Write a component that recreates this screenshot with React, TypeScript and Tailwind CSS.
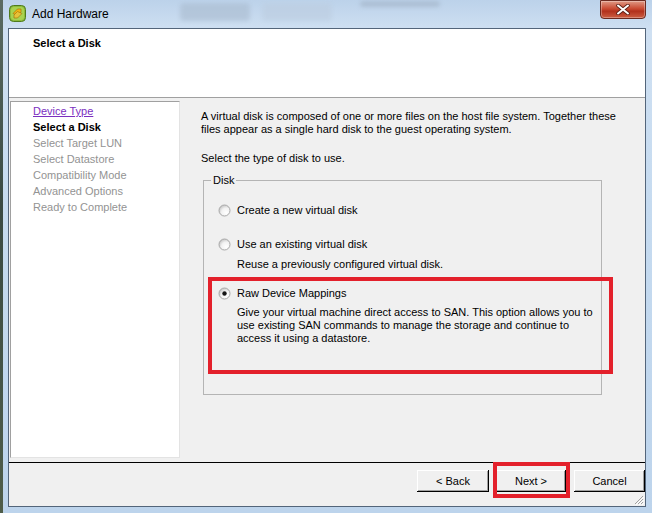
import { useState } from 'react'

const STEPS = [
  { label: 'Device Type', state: 'done' },
  { label: 'Select a Disk', state: 'current' },
  { label: 'Select Target LUN', state: 'todo' },
  { label: 'Select Datastore', state: 'todo' },
  { label: 'Compatibility Mode', state: 'todo' },
  { label: 'Advanced Options', state: 'todo' },
  { label: 'Ready to Complete', state: 'todo' },
]

function AppIcon() {
  return (
    <svg width="17" height="17" viewBox="0 0 17 17" className="shrink-0">
      <rect x="0.5" y="0.5" width="16" height="16" rx="4" fill="#8cbc3c" stroke="#4f7a1c" />
      <rect x="2" y="2" width="13" height="13" rx="3" fill="#a9d24f" />
      <path d="M4 8.5 L8.5 4 H12 V7 L8.5 10.5 Z" fill="#f4b414" stroke="#9a6a08" strokeWidth="0.6" />
      <path d="M13 8.5 L8.5 13 H5 V10 L8.5 6.5 Z" fill="#e6c23a" stroke="#9a6a08" strokeWidth="0.6" />
    </svg>
  )
}

function CloseButton() {
  return (
    <div className="flex h-[19px] w-[46px] items-center justify-center rounded-b-[4px] border border-[#6b2a20] bg-[linear-gradient(#e09a86,#c94a32_45%,#b2311c_60%,#cc5e42)] shadow-[inset_0_0_0_1px_rgba(255,255,255,0.3)]">
      <svg width="14" height="11" viewBox="0 0 14 11">
        <path d="M2 1.5 L12 9.5 M12 1.5 L2 9.5" stroke="#5a1f16" strokeWidth="3.6" strokeLinecap="round" />
        <path d="M2 1.5 L12 9.5 M12 1.5 L2 9.5" stroke="#ffffff" strokeWidth="2" strokeLinecap="round" />
      </svg>
    </div>
  )
}

function Radio({ checked = false }: { checked?: boolean }) {
  return (
    <svg width="13" height="13" viewBox="0 0 13 13" className="shrink-0">
      <defs>
        <radialGradient id={checked ? 'rg1' : 'rg0'} cx="0.65" cy="0.7" r="0.7">
          <stop offset="0" stopColor="#ffffff" />
          <stop offset="0.6" stopColor="#f2f2f2" />
          <stop offset="1" stopColor="#c8c8c8" />
        </radialGradient>
      </defs>
      <circle cx="6.5" cy="6.5" r="5.5" fill={`url(#${checked ? 'rg1' : 'rg0'})`} stroke="#a8a8a8" />
      {checked && <circle cx="6.5" cy="6.5" r="2.2" fill="#151515" />}
    </svg>
  )
}

function Btn({ label, w }: { label: string; w: string }) {
  return (
    <button
      className={`${w} h-[22px] bg-[#f0f0f0] text-[11px] text-black shadow-[inset_-1px_-1px_0_#000,inset_1px_1px_0_#fff,inset_-2px_-2px_0_#a0a0a0]`}
    >
      {label}
    </button>
  )
}

export default function App() {
  const [choice, setChoice] = useState('raw')

  return (
    <div className="relative h-[513px] w-[652px] overflow-hidden bg-[linear-gradient(180deg,#bcd2ea,#cfe0f2_6%,#c6dbf0_40%,#bdd4ec)] font-['Liberation_Sans',Arial,sans-serif] text-black">
      {/* blurred desktop behind the glass */}
      <div className="absolute left-0 top-0 h-full w-[3px] bg-[linear-gradient(#5b6b62,#3a4a44_40%,#4f5d4a)]" />
      <div className="absolute left-[180px] top-[3px] h-[18px] w-[70px] rounded bg-[#a9bbcf] opacity-60 blur-[2px]" />
      <div className="absolute left-[262px] top-[3px] h-[18px] w-[70px] rounded bg-[#bccde0] opacity-60 blur-[2px]" />
      <div className="absolute left-[360px] top-[1px] h-[6px] w-[80px] rounded bg-[#9aaabd] opacity-50 blur-[2px]" />

      {/* title bar */}
      <div className="flex h-[28px] items-start">
        <div className="flex items-center gap-[6px] pl-[9px] pt-[5px]">
          <AppIcon />
          <span className="text-[12px] leading-[16px]">Add Hardware</span>
        </div>
        <div className="ml-auto mr-[6px]">
          <CloseButton />
        </div>
      </div>

      {/* client area */}
      <div className="ml-[8px] mr-[6px] flex h-[479px] flex-col border border-[#53657a] bg-[#f0f0f0] text-[11px] leading-[13px]">
        <div className="h-[69px] shrink-0 border-b border-[#a0a0a0] bg-white pl-[24px] pt-[8px] font-bold">
          Select a Disk
        </div>

        <div className="flex min-h-0 flex-1">
          <div className="mb-[4px] ml-px mt-[3px] w-[170px] shrink-0 border border-b-[#e3e3e3] border-l-[#a0a0a0] border-r-[#e3e3e3] border-t-[#a0a0a0] bg-white pl-[22px] pt-px">
            {STEPS.map(s => (
              <div
                key={s.label}
                className={
                  s.state === 'done'
                    ? 'leading-[16px] text-[#7b2fbf] underline'
                    : s.state === 'current'
                      ? 'font-bold leading-[16px]'
                      : 'leading-[16px] text-[#939393]'
                }
              >
                {s.label}
              </div>
            ))}
          </div>

          <div className="ml-[21px] flex flex-1 flex-col pt-[12px]">
            <p>
              A virtual disk is composed of one or more files on the host file system. Together these
              <br />
              files appear as a single hard disk to the guest operating system.
            </p>
            <p className="mt-[16px]">Select the type of disk to use.</p>

            <fieldset className="ml-[2px] mt-[9px] h-[221px] w-[399px] border border-[#b4b4b4]">
              <legend className="ml-[7px] px-[2px]">Disk</legend>

              <div className="pl-[14px]">
                <label className="mt-[17px] flex items-center gap-[6px]" onClick={() => setChoice('new')}>
                  <Radio checked={choice === 'new'} />
                  <span>Create a new virtual disk</span>
                </label>

                <label className="mt-[21px] flex items-center gap-[6px]" onClick={() => setChoice('existing')}>
                  <Radio checked={choice === 'existing'} />
                  <span>Use an existing virtual disk</span>
                </label>
                <p className="ml-[19px] mt-[7px]">Reuse a previously configured virtual disk.</p>

                <label className="mt-[16px] flex items-center gap-[6px]" onClick={() => setChoice('raw')}>
                  <Radio checked={choice === 'raw'} />
                  <span>Raw Device Mappings</span>
                </label>
                <p className="ml-[19px] mt-[6px]">
                  Give your virtual machine direct access to SAN. This option allows you to
                  <br />
                  use existing SAN commands to manage the storage and continue to
                  <br />
                  access it using a datastore.
                </p>
              </div>
            </fieldset>
          </div>
        </div>

        <div className="relative h-[44px] shrink-0 border-t border-black">
          <div className="flex justify-end gap-[7px] pt-[7px]">
            <Btn label="< Back" w="w-[72px]" />
            <Btn label="Next >" w="w-[70px]" />
            <div className="ml-px">
              <Btn label="Cancel" w="w-[71px]" />
            </div>
          </div>
          <svg width="11" height="11" viewBox="0 0 11 11" className="absolute bottom-[1px] right-[1px]">
            <path d="M10 2 L2 10 M10 5 L5 10 M10 8 L8 10" stroke="#a0a0a0" strokeWidth="1" />
            <path d="M11 3 L3 11 M11 6 L6 11 M11 9 L9 11" stroke="#ffffff" strokeWidth="1" />
          </svg>
        </div>
      </div>

      {/* red annotation boxes */}
      <div className="pointer-events-none absolute left-[208px] top-[277px] h-[97px] w-[405px] border-[4px] border-[#e3202b]" />
      <div className="pointer-events-none absolute left-[493px] top-[462px] h-[36px] w-[77px] border-[4px] border-[#e3202b]" />
    </div>
  )
}
